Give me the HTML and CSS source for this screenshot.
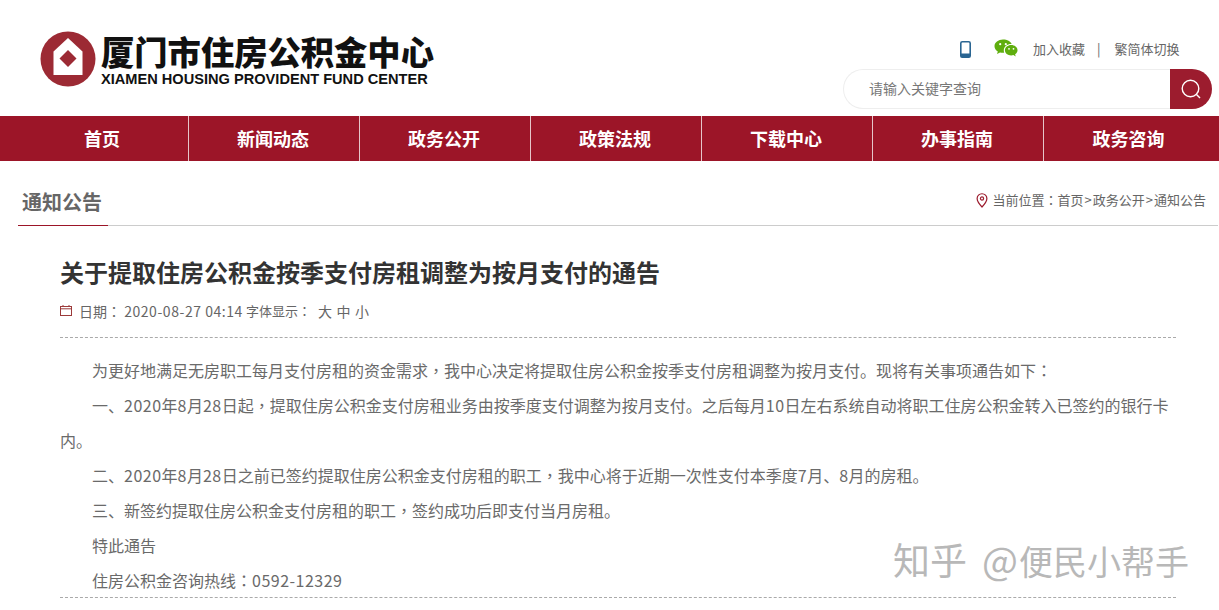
FILE: index.html
```html
<!DOCTYPE html>
<html lang="zh-CN">
<head>
<meta charset="utf-8">
<title>关于提取住房公积金按季支付房租调整为按月支付的通告</title>
<link rel="stylesheet" href="styles.css">
</head>
<body>
<header class="site-header">
  <a class="logo">
    <svg class="logo-mark" viewBox="0 0 56 56" width="56" height="56">
      <circle cx="28" cy="28" r="27.500" fill="#9c2a34"/>
      <path d="M13.500 20.500 L28 7 L42.500 20.500 V44 H13.500 Z" fill="#fff"/>
      <path d="M28 19 L36.500 27.500 L28 36 L19.500 27.500 Z" fill="#9c2a34"/>
    </svg>
    <span class="logo-text">
      <span class="logo-cn">厦门市住房公积金中心</span>
      <span class="logo-en">XIAMEN HOUSING PROVIDENT FUND CENTER</span>
    </span>
  </a>
  <div class="tools">
    <div class="tool-links">
      <svg class="ico-phone" viewBox="0 0 11 17" width="11" height="17">
        <rect x="0.800" y="0.800" width="9.400" height="15.400" rx="1.500" fill="#fff" stroke="#2a6592" stroke-width="1.600"/>
        <rect x="0.800" y="12.500" width="9.400" height="3.700" fill="#2a6592"/>
      </svg>
      <svg class="ico-wechat" viewBox="0 0 24 18" width="24" height="18">
        <path d="M9 0.500C4.300 0.500 0.500 3.500 0.500 7.200c0 2.200 1.300 4 3.300 5.200L3 15l3-1.600c1 .3 2 .4 3 .4 .4 0 .8 0 1.200-.1C9.900 12.800 9.800 12 9.800 11.300c0-3.500 3.400-6.200 7.500-6.200h.4C16.800 2.400 13.200.5 9 .5z" fill="#5fae0e"/>
        <path d="M23.500 11.200c0-3-3-5.200-6.300-5.200-3.500 0-6.300 2.300-6.300 5.200s2.800 5.200 6.300 5.200c.7 0 1.500-.1 2.200-.3l2.300 1.400-.6-2.200c1.500-1 2.400-2.500 2.400-4.100z" fill="#5fae0e"/>
        <circle cx="6.200" cy="5.200" r="1.100" fill="#fff"/><circle cx="11.800" cy="5.200" r="1.100" fill="#fff"/>
        <circle cx="15" cy="9.800" r=".9" fill="#fff"/><circle cx="19.500" cy="9.800" r=".9" fill="#fff"/>
      </svg>
      <span class="link-text">加入收藏</span>
      <span class="link-text link-sep">|</span>
      <span class="link-text">繁简体切换</span>
    </div>
    <div class="search">
      <span class="search-input">请输入关键字查询</span>
      <span class="search-btn">
        <svg viewBox="0 0 22 22" width="22" height="22" fill="none" stroke="#fff" stroke-width="1.400">
          <circle cx="10.500" cy="10.500" r="8.300"/>
          <path d="M16.500 16.500 L20 20"/>
        </svg>
      </span>
    </div>
  </div>
</header>

<nav class="main-nav">
  <a class="nav-item">首页</a>
  <a class="nav-item">新闻动态</a>
  <a class="nav-item">政务公开</a>
  <a class="nav-item">政策法规</a>
  <a class="nav-item">下载中心</a>
  <a class="nav-item">办事指南</a>
  <a class="nav-item">政务咨询</a>
</nav>

<section class="crumb-bar">
  <h2 class="section-name">通知公告</h2>
  <div class="crumbs">
    <svg viewBox="0 0 12 16" width="12" height="15" fill="none" stroke="#9c1c2e" stroke-width="1.300">
      <path d="M6 .8C3 .8 .8 3 .8 5.900 .8 9.500 6 14.900 6 14.900s5.200-5.400 5.200-9C11.200 3 9 .8 6 .8z"/>
      <circle cx="6" cy="5.800" r="1.700"/>
    </svg>
    <span>当前位置<span class="pc" lang="zh-TW">：</span>首页<span class="gt">&gt;</span>政务公开<span class="gt">&gt;</span>通知公告</span>
  </div>
</section>

<main class="article">
  <h1 class="article-title">关于提取住房公积金按季支付房租调整为按月支付的通告</h1>
  <div class="meta">
    <svg viewBox="0 0 12 11" width="12" height="11" fill="none" stroke="#9c3a3a" stroke-width="1">
      <rect x=".5" y="1.500" width="11" height="9"/>
      <path d="M.5 3.800H11.500M3 0V2M9 0V2"/>
    </svg>
    <span class="meta-date">日期<span class="pc" lang="zh-TW">：</span> <span class="meta-num">2020-08-27 04:14</span></span>
    <span class="meta-size">字体显示<span class="pc" lang="zh-TW">：</span></span>
    <span class="meta-opts"><span>大</span><span>中</span><span>小</span></span>
  </div>
  <div class="article-body">
    <p>为更好地满足无房职工每月支付房租的资金需求<span class="pc" lang="zh-TW">，</span>我中心决定将提取住房公积金按季支付房租调整为按月支付。现将有关事项通告如下<span class="pc" lang="zh-TW">：</span></p>
    <p>一、<span class="num">2020</span>年<span class="num">8</span>月<span class="num">28</span>日起<span class="pc" lang="zh-TW">，</span>提取住房公积金支付房租业务由按季度支付调整为按月支付。之后每月<span class="num">10</span>日左右系统自动将职工住房公积金转入已签约的银行卡内。</p>
    <p>二、<span class="num">2020</span>年<span class="num">8</span>月<span class="num">28</span>日之前已签约提取住房公积金支付房租的职工<span class="pc" lang="zh-TW">，</span>我中心将于近期一次性支付本季度<span class="num">7</span>月、<span class="num">8</span>月的房租。</p>
    <p>三、新签约提取住房公积金支付房租的职工<span class="pc" lang="zh-TW">，</span>签约成功后即支付当月房租。</p>
    <p>特此通告</p>
    <p>住房公积金咨询热线<span class="pc" lang="zh-TW">：</span><span class="num">0592-12329</span></p>
  </div>
</main>
<div class="watermark"><span class="wm-head">知乎</span><span class="wm-at">@</span><span>便民小帮手</span></div>
</body>
</html>
```
FILE: styles.css
```css
* { box-sizing: border-box; }
html, body { margin: 0; padding: 0; height: 610px; overflow: hidden; background: #fff; }
body { position: relative; font-family: "Noto Sans CJK SC", "Liberation Sans", sans-serif; color: #666; }
.pc { font-family: "Noto Sans CJK TC", sans-serif; }

.site-header { height: 116px; display: flex; justify-content: space-between; padding: 31px 7px 0 40px; }
.logo { display: flex; gap: 5px; align-items: flex-start; }
.logo-mark { display: block; }
.logo-text { display: flex; flex-direction: column; }
.logo-cn { font-size: 33.300px; line-height: 40px; font-weight: 900; color: #111; white-space: nowrap; }
.logo-en { font-family: "Liberation Sans", sans-serif; font-size: 14.600px; line-height: 16px; font-weight: 700; color: #111; white-space: nowrap; }

.tools { width: 369px; display: flex; flex-direction: column; }
.tool-links { height: 38px; padding: 0 0 2px 117px; display: flex; align-items: center; font-size: 13px; color: #666; white-space: nowrap; }
.link-text { margin-bottom: 2px; }
.ico-phone { margin-right: 23px; }
.ico-wechat { margin: 0 15px 2px 0; }
.link-sep { margin-left: 12px; margin-right: 14px; }
.search { height: 40px; display: flex; border: 1px solid #eee; border-right: 0; border-radius: 20px; }
.search-input { flex: 1; font-size: 14px; line-height: 36px; padding-left: 25px; color: #777; }
.search-btn { width: 42px; height: 40px; margin-top: -1px; background: #9c1c2e; border-radius: 0 20px 20px 0; display: flex; align-items: center; justify-content: center; }

.main-nav { height: 45px; background: #9c1528; display: flex; padding-left: 18px; }
.nav-item { width: 171px; border-right: 1px solid #e6c5ca; text-align: center; color: #fff; font-size: 18px; font-weight: 700; line-height: 45px; padding-right: 2px; }
.nav-item:last-child { border-right: 0; }

.crumb-bar { margin: 0 1px 0 18px; height: 65px; border-bottom: 1px solid #ccc; display: flex; justify-content: space-between; align-items: flex-end; }
.section-name { margin: 0 0 -1px; width: 90px; height: 65px; padding: 26px 0 0 4px; font-size: 20px; line-height: 29px; font-weight: 700; color: #666; border-bottom: 1px solid #9c1528; }
.crumbs { display: flex; align-items: center; gap: 4px; font-size: 13px; line-height: 18px; color: #666; margin: 0 12px 16px 0; }
.gt { margin: 0 1px; }

.article { padding: 0 43px 0 60px; }
.article-title { margin: 0; padding-top: 28px; font-size: 24px; line-height: 36px; font-weight: 700; color: #333; }
.meta { height: 48px; padding-bottom: 6px; display: flex; align-items: center; font-size: 14px; color: #666; border-bottom: 1px dashed #aaa; }
.meta svg { margin-right: 7px; }
.meta-num { letter-spacing: 0.550px; }
.meta-size { font-size: 13px; margin-left: 3px; }
.meta-opts { display: flex; gap: 4.500px; margin-left: 7px; }
.article-body { padding-top: 15px; border-bottom: 1px dashed #aaa; }
.article-body p { margin: 0; font-size: 16px; line-height: 35px; text-indent: 32px; color: #6a6a6a; }
.article-body p:last-child { height: 34px; }
.num { letter-spacing: 0.500px; }

.watermark { position: absolute; left: 893px; top: 534px; font-size: 34px; line-height: 50px; white-space: nowrap; color: #b8b8b8; text-shadow: 1px 1px 0 #fff; }
.wm-head { font-size: 37px; margin-right: 15px; }
.wm-at { font-size: 38px; margin-right: 1px; }
```
